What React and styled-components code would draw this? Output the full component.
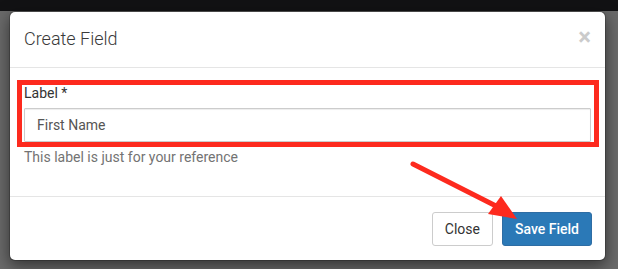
import React from 'react'
import styled, { createGlobalStyle } from 'styled-components'

const GlobalStyle = createGlobalStyle`
  html, body {
    margin: 0;
    padding: 0;
  }
  body {
    background: #6a6a6a;
    font-family: Roboto, 'Liberation Sans', sans-serif;
    overflow: hidden;
  }
`

export default function App() {
  return (
    <Page>
      <GlobalStyle />
      <TopBar />
      <Backdrop>
        <Modal>
          <Header>
            <Title>Create Field</Title>
            <CloseX>×</CloseX>
          </Header>
          <Body>
            <FormGroup>
              <Label>Label *</Label>
              <Input type="text" defaultValue="First Name" />
              <Highlight />
            </FormGroup>
            <Help>This label is just for your reference</Help>
          </Body>
          <Footer>
            <Button>Close</Button>
            <Button primary>Save Field</Button>
          </Footer>
          <Arrow width="597" height="250">
            <line x1="403" y1="152" x2="486" y2="194" stroke="#fd2a1e" strokeWidth="5" strokeLinecap="round" />
            <polygon points="491,184 478,202 507,207" fill="#fd2a1e" />
          </Arrow>
        </Modal>
      </Backdrop>
    </Page>
  )
}

const Page = styled.div`
  display: flex;
  flex-direction: column;
  min-height: 269px;
  background: #6a6a6a;
`

const TopBar = styled.div`
  height: 11px;
  background: #121214;
`

const Backdrop = styled.div`
  flex: 1;
  padding-left: 9px;
`

const Modal = styled.div`
  position: relative;
  width: 597px;
  box-sizing: border-box;
  background: #fff;
  border: 1px solid rgba(0, 0, 0, 0.2);
  border-radius: 6px;
  background-clip: padding-box;
  box-shadow: 0 5px 15px rgba(0, 0, 0, 0.5);
`

const Header = styled.div`
  display: flex;
  justify-content: space-between;
  align-items: flex-start;
  padding: 14px 14px 15px;
  border-bottom: 1px solid #e5e5e5;
`

const Title = styled.h4`
  margin: 0;
  font-size: 18px;
  font-weight: 300;
  line-height: 25.7px;
  color: #3a3a3a;
`

const CloseX = styled.span`
  font-size: 24px;
  font-weight: 700;
  line-height: 1;
  margin-top: -1px;
  color: #000;
  opacity: 0.2;
`

const Body = styled.div`
  padding: 15px 14px 14px;
`

const FormGroup = styled.div`
  position: relative;
`

const Label = styled.label`
  display: block;
  margin-bottom: 5px;
  font-size: 14px;
  line-height: 20px;
  color: #333;
`

const Input = styled.input`
  display: block;
  width: 100%;
  height: 34px;
  box-sizing: border-box;
  padding: 6px 12px;
  border: 1px solid #ccc;
  border-radius: 1px;
  box-shadow: inset 0 1px 1px rgba(0, 0, 0, 0.075);
  font-family: Roboto, 'Liberation Sans', sans-serif;
  font-size: 14px;
  color: #555;
  outline: none;
`

const Highlight = styled.div`
  position: absolute;
  top: -3px;
  left: -7px;
  right: -8px;
  bottom: -5px;
  border: 5px solid #fd2a1e;
  pointer-events: none;
`

const Help = styled.p`
  margin: 5px 0 15px;
  font-size: 14px;
  line-height: 20px;
  color: #737373;
`

const Footer = styled.div`
  display: flex;
  justify-content: flex-end;
  gap: 9px;
  padding: 15px 13px 14px 14px;
  border-top: 1px solid #e5e5e5;
`

const Button = styled.button`
  height: 34px;
  padding: 6px 12px;
  box-sizing: border-box;
  border-radius: 3px;
  border: 1px solid ${(p) => (p.primary ? '#2e6da4' : '#ccc')};
  background: ${(p) => (p.primary ? '#2b79b7' : '#fff')};
  color: ${(p) => (p.primary ? '#fff' : '#333')};
  font-family: Roboto, 'Liberation Sans', sans-serif;
  font-size: 14px;
  font-weight: ${(p) => (p.primary ? 500 : 400)};
  line-height: 20px;
`

const Arrow = styled.svg`
  position: absolute;
  top: 0;
  left: 0;
  pointer-events: none;
  overflow: visible;
`
